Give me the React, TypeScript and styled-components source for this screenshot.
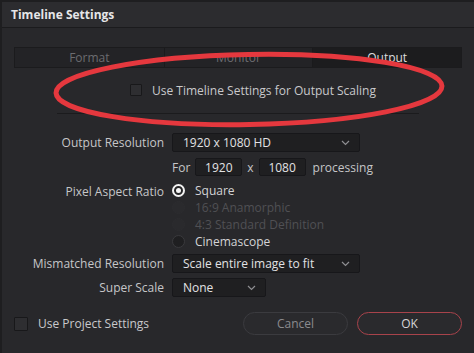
import styled, { createGlobalStyle } from 'styled-components';

const GlobalStyle = createGlobalStyle`
  html, body {
    margin: 0;
    padding: 0;
    background: #28282b;
  }
  body {
    font-family: 'Open Sans', 'Noto Sans', sans-serif;
    font-size: 12px;
    color: #c9c9cb;
  }
`;

const Window = styled.div`
  position: relative;
  width: 474px;
  height: 353px;
  background: #28282b;
  border-top: 2px solid #1e1e20;
  border-left: 2px solid #1e1e20;
  box-sizing: border-box;
  overflow: hidden;
`;

const TitleBar = styled.div`
  height: 25px;
  display: flex;
  align-items: center;
  padding-left: 9px;
  background: #2c2c2f;
  border-bottom: 1px solid #1b1b1d;
  font-weight: 700;
  font-size: 12px;
  color: #e6e6e8;
`;

const Content = styled.div`
  padding: 19px 12px 0 12px;
  display: flex;
  flex-direction: column;
`;

const TabBar = styled.div`
  height: 21px;
  display: grid;
  grid-template-columns: 1fr 1fr 1fr;
  background: #232326;
  border: 1px solid #1b1b1d;
  box-sizing: border-box;
`;

const Tab = styled.div<{ $active?: boolean }>`
  display: flex;
  align-items: center;
  justify-content: center;
  background: ${(p) => (p.$active ? '#1c1c1e' : 'transparent')};
  color: ${(p) => (p.$active ? '#dcdcde' : '#6c6c70')};
  & + & {
    border-left: 1px solid #1a1a1c;
  }
`;

const CheckRow = styled.label`
  display: flex;
  align-items: center;
  gap: 10px;
`;

const TopCheck = styled(CheckRow)`
  margin-top: 16px;
  padding-left: 116px;
  height: 12px;
`;

const Box = styled.span<{ $size?: number }>`
  width: ${(p) => p.$size ?? 12}px;
  height: ${(p) => p.$size ?? 12}px;
  box-sizing: border-box;
  background: #2e2e31;
  border: 1px solid #18181a;
  border-radius: 1px;
`;

const Separator = styled.div`
  height: 1px;
  background: #1b1b1d;
  margin: 17px 43px 0 43px;
`;

const Form = styled.div`
  margin-top: 19px;
  display: grid;
  grid-template-columns: 150px 1fr;
  column-gap: 8px;
  align-items: center;
`;

const Label = styled.div<{ $mt?: number; $top?: boolean }>`
  margin-top: ${(p) => p.$mt ?? 0}px;
  align-self: ${(p) => (p.$top ? 'start' : 'center')};
  text-align: right;
  color: #c6c6c8;
  white-space: nowrap;
`;

const Select = styled.div<{ $width: number }>`
  width: ${(p) => p.$width}px;
  height: 19px;
  box-sizing: border-box;
  background: #1f1f21;
  border: 1px solid #17171a;
  border-radius: 2px;
  display: flex;
  align-items: center;
  justify-content: space-between;
  padding: 0 9px 0 10px;
  color: #e2e2e4;
`;

const Cell = styled.div<{ $mt?: number }>`
  margin-top: ${(p) => p.$mt ?? 0}px;
  display: flex;
  align-items: center;
`;

const Dim = styled.div`
  display: flex;
  align-items: center;
  gap: 5px;
  color: #c6c6c8;
`;

const Processing = styled.span`
  margin-left: 2px;
`;

const NumBox = styled.div`
  width: 47px;
  height: 18px;
  box-sizing: border-box;
  background: #1f1f21;
  border: 1px solid #17171a;
  border-radius: 2px;
  display: flex;
  align-items: center;
  justify-content: center;
  color: #e2e2e4;
`;

const RadioList = styled.div`
  display: flex;
  flex-direction: column;
  gap: 4px;
`;

const RadioRow = styled.div<{ $disabled?: boolean }>`
  height: 13px;
  display: flex;
  align-items: center;
  gap: 10px;
  color: ${(p) => (p.$disabled ? '#505054' : '#d4d4d6')};
`;

const RadioDot = styled.span<{ $checked?: boolean; $disabled?: boolean }>`
  width: 13px;
  height: 13px;
  box-sizing: border-box;
  border-radius: 50%;
  display: flex;
  align-items: center;
  justify-content: center;
  background: ${(p) => (p.$checked ? '#242426' : p.$disabled ? '#2a2a2d' : '#1f1f21')};
  border: ${(p) =>
    p.$checked ? '2px solid #f2f2f2' : p.$disabled ? '1px solid #2c2c2f' : '1px solid #3a3a3d'};
  &::after {
    content: '';
    width: 5px;
    height: 5px;
    border-radius: 50%;
    background: #f5f5f5;
    display: ${(p) => (p.$checked ? 'block' : 'none')};
  }
`;

const Footer = styled.div`
  margin-top: 15px;
  display: flex;
  align-items: center;
  justify-content: space-between;
`;

const Buttons = styled.div`
  display: flex;
  gap: 9px;
`;

const Button = styled.div<{ $primary?: boolean }>`
  width: 105px;
  height: 23px;
  box-sizing: border-box;
  border-radius: 12px;
  border: 1px solid ${(p) => (p.$primary ? '#a8434b' : '#3b3b3f')};
  background: #2a2a2d;
  display: flex;
  align-items: center;
  justify-content: center;
  color: ${(p) => (p.$primary ? '#d6d6d8' : '#8a8a8e')};
`;

const Annotation = styled.svg`
  position: absolute;
  left: -2px;
  top: -2px;
  pointer-events: none;
`;

function Chevron() {
  return (
    <svg width="9" height="6" viewBox="0 0 9 6">
      <path d="M1 1 L4.5 4.5 L8 1" fill="none" stroke="#8e8e92" strokeWidth="1.2" />
    </svg>
  );
}

export default function App() {
  return (
    <>
      <GlobalStyle />
      <Window>
        <TitleBar>Timeline Settings</TitleBar>
        <Content>
          <TabBar>
            <Tab>Format</Tab>
            <Tab>Monitor</Tab>
            <Tab $active>Output</Tab>
          </TabBar>
          <TopCheck>
            <Box />
            <span>Use Timeline Settings for Output Scaling</span>
          </TopCheck>
          <Separator />
          <Form>
            <Label>Output Resolution</Label>
            <Cell>
              <Select $width={188}>
                <span>1920 x 1080 HD</span>
                <Chevron />
              </Select>
            </Cell>
            <div />
            <Cell $mt={6}>
              <Dim>
                <span>For</span>
                <NumBox>1920</NumBox>
                <span>x</span>
                <NumBox>1080</NumBox>
                <Processing>processing</Processing>
              </Dim>
            </Cell>
            <Label $top $mt={7}>Pixel Aspect Ratio</Label>
            <Cell $mt={8}>
              <RadioList>
                <RadioRow>
                  <RadioDot $checked />
                  <span>Square</span>
                </RadioRow>
                <RadioRow $disabled>
                  <RadioDot $disabled />
                  <span>16:9 Anamorphic</span>
                </RadioRow>
                <RadioRow $disabled>
                  <RadioDot $disabled />
                  <span>4:3 Standard Definition</span>
                </RadioRow>
                <RadioRow>
                  <RadioDot />
                  <span>Cinemascope</span>
                </RadioRow>
              </RadioList>
            </Cell>
            <Label $mt={6}>Mismatched Resolution</Label>
            <Cell $mt={6}>
              <Select $width={188}>
                <span>Scale entire image to fit</span>
                <Chevron />
              </Select>
            </Cell>
            <Label $mt={5}>Super Scale</Label>
            <Cell $mt={5}>
              <Select $width={94}>
                <span>None</span>
                <Chevron />
              </Select>
            </Cell>
          </Form>
          <Footer>
            <CheckRow>
              <Box $size={14} />
              <span>Use Project Settings</span>
            </CheckRow>
            <Buttons>
              <Button>Cancel</Button>
              <Button $primary>OK</Button>
            </Buttons>
          </Footer>
        </Content>
        <Annotation width="474" height="353" viewBox="0 0 474 353">
          <ellipse
            cx="249"
            cy="89.5"
            rx="193"
            ry="35"
            fill="none"
            stroke="#e5383e"
            strokeWidth="5"
            transform="rotate(-1 249 89.5)"
          />
        </Annotation>
      </Window>
    </>
  );
}
